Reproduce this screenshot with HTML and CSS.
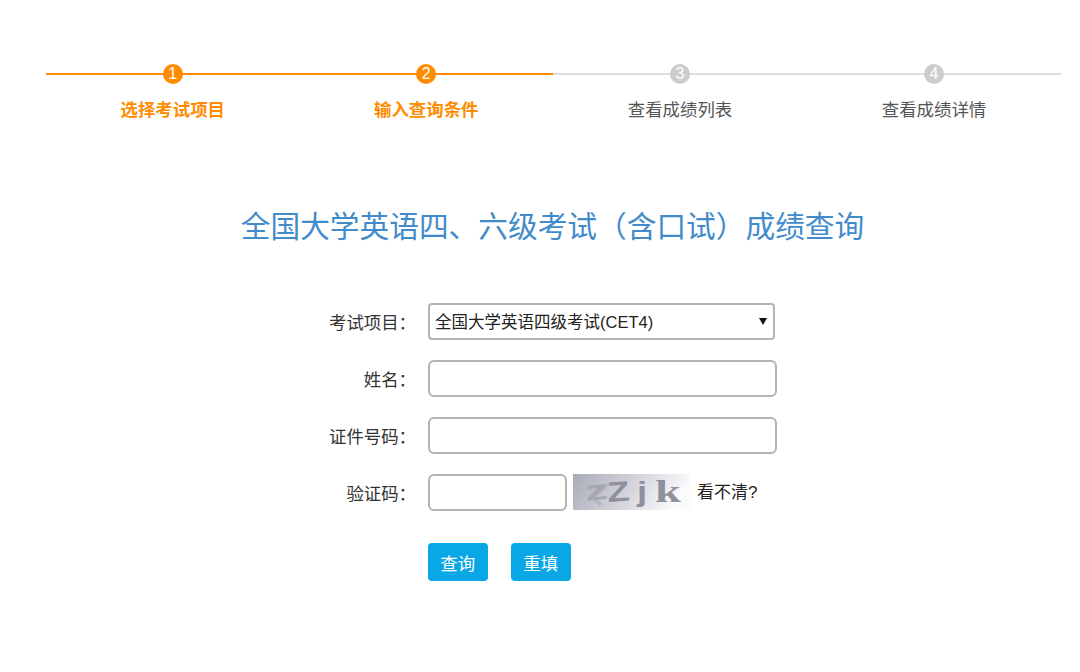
FILE: index.html
```html
<!DOCTYPE html>
<html lang="zh-CN">
<head>
    <meta charset="UTF-8">
    <meta name="viewport" content="width=device-width, initial-scale=1.0">
    <title>成绩查询</title>
    <link rel="stylesheet" href="styles.css">
</head>
<body>
    <div class="steps">
        <div class="step done">
            <span class="step-num">1</span>
            <span class="step-name">选择考试项目</span>
        </div>
        <div class="step done">
            <span class="step-num">2</span>
            <span class="step-name">输入查询条件</span>
        </div>
        <div class="step">
            <span class="step-num">3</span>
            <span class="step-name">查看成绩列表</span>
        </div>
        <div class="step">
            <span class="step-num">4</span>
            <span class="step-name">查看成绩详情</span>
        </div>
    </div>

    <h1 class="title">全国大学英语四、六级考试（含口试）成绩查询</h1>

    <form class="query-form">
        <div class="row row-select">
            <label class="label">考试项目：</label>
            <div class="select-wrap">
                <select class="select">
                    <option>全国大学英语四级考试(CET4)</option>
                    <option>全国大学英语六级考试(CET6)</option>
                </select>
            </div>
        </div>
        <div class="row">
            <label class="label">姓名：</label>
            <input type="text" class="input">
        </div>
        <div class="row">
            <label class="label">证件号码：</label>
            <input type="text" class="input">
        </div>
        <div class="row">
            <label class="label">验证码：</label>
            <input type="text" class="input input-code">
            <svg class="captcha" width="118" height="36" viewBox="0 0 118 36">
                <defs>
                    <linearGradient id="captchaBg" x1="0" y1="0" x2="1" y2="0.2">
                        <stop offset="0" stop-color="#a9abb8"/>
                        <stop offset="0.55" stop-color="#d4d5dc"/>
                        <stop offset="1" stop-color="#fbfbfc"/>
                    </linearGradient>
                </defs>
                <rect width="118" height="36" fill="url(#captchaBg)"/>
                <path d="M14 15 L34 11 L20 24 L28 31" fill="none" stroke="#b4b5be" stroke-width="3"/>
                <text class="captcha-text small light" transform="translate(13 27) rotate(-6) scale(1.6 1)">z</text>
                <text class="captcha-text small" transform="translate(35 28) rotate(-4) scale(1.3 1)">Z</text>
                <text class="captcha-text small" transform="translate(64 27) scale(1.3 1)">j</text>
                <text class="captcha-text serif" transform="translate(82 28) scale(1.5 1)">k</text>
            </svg>
            <a class="refresh">看不清?</a>
        </div>
        <div class="actions">
            <button type="button" class="btn">查询</button>
            <button type="button" class="btn">重填</button>
        </div>
    </form>
</body>
</html>
```

FILE: styles.css
```css
body {
    margin: 0;
    background: #fff;
    color: #333;
    font-family: "Liberation Sans", "Noto Sans CJK SC", sans-serif;
    font-size: 17.4px;
}
.steps {
    display: flex;
    width: 1015px;
    margin-left: 46px;
    padding-top: 64px;
}
.step {
    flex: 1;
    display: flex;
    flex-direction: column;
    align-items: center;
    background: linear-gradient(#ddd, #ddd) no-repeat 0 9px / 100% 2px;
}
.step.done {
    flex: 0 0 253.5px;
    background-image: linear-gradient(#ff8c00, #ff8c00);
}
.step-num {
    width: 20px;
    height: 20px;
    border-radius: 50%;
    background: #ccc;
    color: #fff;
    font-size: 16px;
    line-height: 20px;
    text-align: center;
}
.done .step-num {
    background: #ff8c00;
}
.step-name {
    margin-top: 13px;
    color: #555;
    font-size: 17.4px;
    line-height: 26px;
}
.done .step-name {
    color: #ff8c00;
    font-weight: bold;
}
.title {
    margin: 82px 0 0;
    padding-left: 25px;
    color: #428bca;
    font-size: 29.7px;
    font-weight: normal;
    line-height: 44px;
    text-align: center;
}
.query-form {
    margin-top: 54px;
    padding-left: 329px;
}
.row {
    display: flex;
    align-items: flex-start;
    height: 37px;
    margin-bottom: 20px;
}
.label {
    width: 99px;
    padding-right: 12px;
    box-sizing: border-box;
    color: #333;
    line-height: 40px;
    text-align: right;
    white-space: nowrap;
}
.select-wrap {
    position: relative;
    width: 347px;
}
.select-wrap::after {
    content: "";
    position: absolute;
    top: 15px;
    right: 8px;
    border-left: 4px solid transparent;
    border-right: 4px solid transparent;
    border-top: 7px solid #111;
}
.select {
    appearance: none;
    display: block;
    width: 100%;
    height: 37px;
    padding: 0 5px;
    border: 2px solid #b3b3b3;
    border-radius: 4px;
    background: #fff;
    color: #222;
    font-family: inherit;
    font-size: 16.5px;
}
.input {
    width: 349px;
    height: 37px;
    box-sizing: border-box;
    border: 2px solid #b3b3b3;
    border-radius: 6px;
    background: #fff;
}
.input-code {
    width: 139px;
}
.captcha {
    display: block;
    margin-left: 6px;
}
.captcha-text {
    fill: #8f909c;
    font-family: "Liberation Sans", sans-serif;
    font-weight: bold;
}
.captcha-text.small {
    font-size: 28px;
}
.captcha-text.serif {
    font-family: "Liberation Serif", serif;
    font-size: 31px;
}
.captcha-text.light {
    fill: #a5a6b1;
}
.refresh {
    margin-left: 6px;
    color: #222;
    font-size: 17px;
    line-height: 38px;
}
.actions {
    display: flex;
    gap: 23.5px;
    margin-top: 32px;
    padding-left: 99px;
}
.btn {
    width: 59.5px;
    height: 38px;
    padding: 0;
    border: none;
    border-radius: 4px;
    background: #0aa7e6;
    color: #fff;
    font-family: inherit;
    font-size: 17.4px;
}
```
